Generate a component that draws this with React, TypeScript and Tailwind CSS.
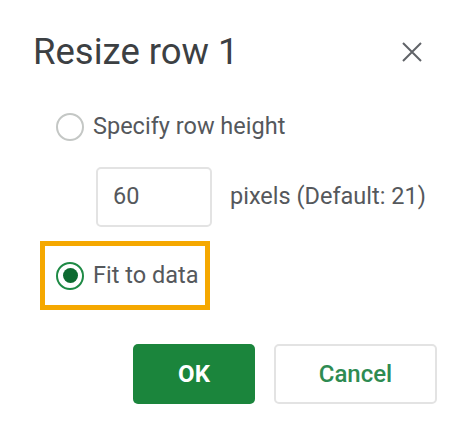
function Radio({ checked }: { checked?: boolean }) {
  if (checked) {
    return (
      <span className="flex h-[28px] w-[28px] items-center justify-center rounded-full border-[2.5px] border-[#1e8a45]">
        <span className="h-[15px] w-[15px] rounded-full bg-[#0d6a30]" />
      </span>
    );
  }
  return <span className="h-[28px] w-[28px] rounded-full border-2 border-[#c4c7c5]" />;
}

export default function App() {
  return (
    <div
      className="flex h-[439px] w-[474px] flex-col bg-white"
      style={{ fontFamily: "Roboto, 'Liberation Sans', sans-serif" }}
    >
      <div className="mt-[32px] flex h-[40px] items-center justify-between pl-[33px] pr-[52px]">
        <h1 className="text-[36.5px] leading-[40px] text-[#3c4043]">Resize row 1</h1>
        <svg width="20" height="20" viewBox="0 0 20 20" className="text-[#606368]">
          <path d="M1 1 19 19M19 1 1 19" stroke="currentColor" strokeWidth="2" fill="none" />
        </svg>
      </div>

      <div className="mt-[40px] flex h-[30px] items-center gap-[9px] pl-[56px]">
        <Radio />
        <span className="text-[23.5px] text-[#55585c]">Specify row height</span>
      </div>

      <div className="mt-[25px] flex items-center gap-[18px] pl-[96px]">
        <div className="flex h-[60px] w-[116px] items-center rounded-[5px] border-2 border-[#e3e3e3] pl-[15px] text-[23.5px] text-[#55585c]">
          60
        </div>
        <span className="text-[23.5px] text-[#55585c]">pixels (Default: 21)</span>
      </div>

      <div className="ml-[40px] mt-[14px] flex h-[69px] w-[170px] items-center gap-[9px] border-[5px] border-[#f5a800] pl-[11px]">
        <Radio checked />
        <span className="text-[23.5px] text-[#55585c]">Fit to data</span>
      </div>

      <div className="mt-[34px] flex justify-end gap-[19px] pr-[37px]">
        <button className="flex h-[60px] w-[122px] items-center justify-center rounded-[5px] bg-[#1b853c] text-[24px] font-bold text-white">
          OK
        </button>
        <button className="flex h-[60px] w-[163px] items-center justify-center rounded-[5px] border-2 border-[#e3e3e3] bg-white text-[24px] font-medium text-[#2e8b52]">
          Cancel
        </button>
      </div>
    </div>
  );
}
